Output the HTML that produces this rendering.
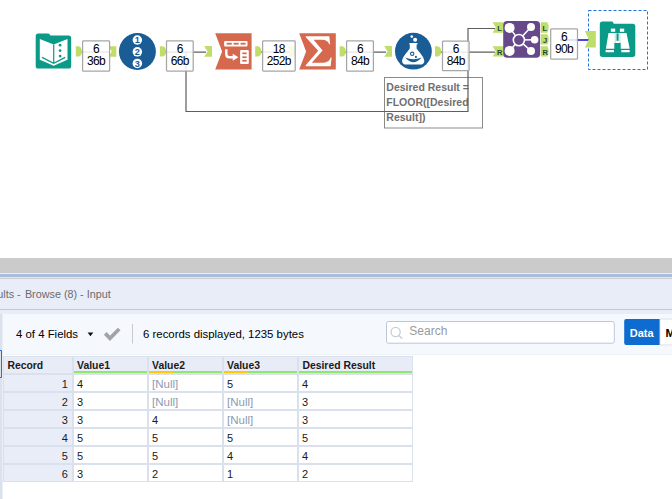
<!DOCTYPE html>
<html><head><meta charset="utf-8">
<style>
html,body{margin:0;padding:0;width:672px;height:499px;overflow:hidden;background:#fff;font-family:"Liberation Sans",sans-serif;}
.a{position:absolute;}
#canvas{position:absolute;left:0;top:0;width:672px;height:258px;}
#graybar{position:absolute;left:0;top:258px;width:672px;height:15px;background:#cbcbcb;}
#l273{position:absolute;left:0;top:273px;width:672px;height:1px;background:#ececec;}
#l274{position:absolute;left:0;top:274px;width:672px;height:3px;background:#abbcdc;}
#l277{position:absolute;left:0;top:277px;width:672px;height:1px;background:#e6e6e8;}
#l278{position:absolute;left:0;top:278px;width:672px;height:1px;background:#cfcfd1;}
#title{position:absolute;left:0;top:279px;width:672px;height:30px;background:#e9edf8;}
#title span{position:absolute;left:-1px;top:8px;font-size:12px;color:#6d6d6d;white-space:nowrap;}
#l309{position:absolute;left:0;top:309px;width:672px;height:1px;background:#c8c9cc;}
#l310{position:absolute;left:0;top:310px;width:672px;height:4px;background:#e9edf8;}
#panel{position:absolute;left:0;top:314px;width:672px;height:40px;background:#f5f8fd;}
#l354{position:absolute;left:0;top:354px;width:672px;height:1px;background:#eef1f6;}
#strip{position:absolute;left:0;top:314px;width:2px;height:185px;background:#dbe1ed;border-right:1px solid #eaeef5;}
.tb{position:absolute;font-size:12px;color:#000;white-space:nowrap;}
#tbl{position:absolute;left:3px;top:356px;width:410px;height:126px;background:#d9dfeb;}
.c{position:absolute;height:17px;background:#fff;font-size:11px;line-height:17px;white-space:nowrap;overflow:hidden;}
.h{background:#e8ecf6;font-weight:bold;}
.r{background:#e9edf7;text-align:right;}
.n{color:#8f9bb3;}
</style></head><body>
<svg id="canvas" width="672" height="258" viewBox="0 0 672 258">
<defs>
<path id="anD" d="M0,0 H2.6 A3.6,5.15 0 0 1 2.6,10.3 H0 Z"/>
<polygon id="anN" points="0,0 7.8,0 7.8,10.6 0,10.6 3.4,5.3"/>
</defs>
<g fill="none" stroke-linecap="butt" stroke="#5e5e5e" stroke-width="1.25">
<line x1="81" y1="52" x2="110" y2="52"/>
<line x1="165" y1="52" x2="206" y2="52"/>
<line x1="261" y1="52" x2="290" y2="52"/>
<line x1="345" y1="52" x2="386" y2="52"/>
<line x1="440" y1="52" x2="495" y2="52"/>
</g>
<!-- annotation -->
<rect x="384.5" y="77.5" width="98" height="50.5" fill="none" stroke="#8a8a8a" stroke-width="1"/>
<g font-family="Liberation Sans" font-weight="bold" font-size="10.5" fill="#707070">
<text x="386.3" y="91">Desired Result =</text>
<text x="386.3" y="105.8">FLOOR([Desired</text>
<text x="386.3" y="120.6">Result])</text>
</g>
<polyline points="186,52 186,111.5 468,111.5 468,28.5 495,28.5" fill="none" stroke="#5e5e5e" stroke-width="1.2"/>
<!-- blue line to browse -->
<line x1="560" y1="40" x2="589" y2="40" stroke="#2626d6" stroke-width="1.7"/>

<!-- Text Input tool -->
<path d="M35.7,36 Q35.7,33.4 38.2,33.4 L48.3,33.4 Q49.6,33.4 50.4,35.4 L68.6,35.4 Q71.2,35.4 71.2,38 L71.2,66 Q71.2,68.6 68.6,68.6 L38.3,68.6 Q35.7,68.6 35.7,66 Z" fill="#0b9a88"/>
<polygon points="39.8,39.1 53.7,44.6 67.5,39.1 67.5,59.8 53.7,65.8 39.8,59.8" fill="#fff"/>
<line x1="53.7" y1="44.6" x2="53.7" y2="63.3" stroke="#0b9a88" stroke-width="1.2"/>
<polyline points="42.1,57.3 53.7,63.3 65.2,57.3" fill="none" stroke="#0b9a88" stroke-width="1.3"/>
<circle cx="60.1" cy="45.2" r="1.35" fill="#0b9a88"/>
<circle cx="60.1" cy="50.6" r="1.35" fill="#0b9a88"/>
<circle cx="60.1" cy="56.1" r="1.35" fill="#0b9a88"/>
<use href="#anD" x="75.8" y="46.2" fill="#bedd6a"/>

<!-- Record ID -->
<use href="#anN" x="108.5" y="46.2" fill="#bedd6a"/>
<circle cx="137.4" cy="51.5" r="18.5" fill="#1a5d96"/>
<g fill="#fff"><circle cx="137.35" cy="40" r="4.75"/><circle cx="137.35" cy="51.8" r="4.75"/><circle cx="137.35" cy="63.4" r="4.75"/></g>
<g font-family="Liberation Sans" font-weight="bold" font-size="9.2" fill="#1a5d96" text-anchor="middle">
<text x="137.4" y="43.3">1</text><text x="137.4" y="55.1">2</text><text x="137.4" y="66.7">3</text></g>
<use href="#anD" x="159.9" y="46.3" fill="#bedd6a"/>

<!-- Cross tab -->
<use href="#anN" x="204.2" y="46.1" fill="#bedd6a"/>
<polygon points="215.2,33.3 251.6,33.3 251.6,69.5 215.2,69.5 222.1,51.5" fill="#d6684e"/>
<rect x="224.1" y="40.9" width="23.4" height="5.5" rx="1" fill="#fff"/>
<g fill="#d6684e"><rect x="226.7" y="42.8" width="5.1" height="1.8"/><rect x="233.6" y="42.8" width="5.1" height="1.8"/><rect x="240.6" y="42.8" width="5" height="1.8"/></g>
<path d="M226.3,49.2 V54.2 Q226.3,57.2 229.3,57.2 H234" fill="none" stroke="#fff" stroke-width="2.4"/>
<polygon points="232.7,53.8 238.4,57.2 232.7,60.7" fill="#fff"/>
<rect x="240.1" y="50.1" width="8.7" height="13.8" rx="1" fill="#fff"/>
<g fill="#d6684e"><rect x="242.3" y="52.5" width="4.3" height="1.7"/><rect x="242.3" y="56.4" width="4.3" height="1.7"/><rect x="242.3" y="59.9" width="4.3" height="1.7"/></g>
<use href="#anD" x="255.2" y="46.3" fill="#bedd6a"/>

<!-- Summarize -->
<use href="#anN" x="287.4" y="46.2" fill="#bedd6a"/>
<polygon points="299.2,33.3 335.8,33.3 335.8,69.5 299.2,69.5 306.1,51.5" fill="#d6684e"/>
<path d="M305.8,36.3 L329.3,36.3 L330.2,44.3 L329.2,44.3 Q327.8,39.8 322,39.8 L313.6,39.8 L322.6,50.4 L311.8,62.7 L323.5,62.7 Q329,62.7 330.7,57.6 L331.6,57.6 L330.6,66.2 L305.7,66.2 L305.7,65.2 L318.2,50.8 L305.8,37.3 Z" fill="#fff"/>
<use href="#anD" x="339.6" y="46.3" fill="#bedd6a"/>

<!-- Formula -->
<use href="#anN" x="384.2" y="46.1" fill="#bedd6a"/>
<circle cx="413.4" cy="51.2" r="18.4" fill="#1a5d96"/>
<path d="M409.4,43.1 H417.4 V44.6 H416.6 V48.4 C420,53 424.5,57.5 424.3,61.2 C424.2,63.6 422.5,64.6 420,64.6 H406.4 C403.9,64.6 402.2,63.6 402.1,61.2 C402,57.5 406.4,53 409.8,48.4 V44.6 H409.4 Z" fill="#fff"/>
<circle cx="412.2" cy="53.8" r="1.7" fill="none" stroke="#1a5d96" stroke-width="1.1"/>
<circle cx="415.9" cy="56.9" r="1.05" fill="#1a5d96"/>
<path d="M405.2,57.6 Q413.4,67 421.6,57.6 Q413.4,61 405.2,57.6 Z" fill="#1a5d96"/>
<circle cx="411.8" cy="36.6" r="1.3" fill="#fff"/>
<circle cx="415.1" cy="39.7" r="2" fill="#fff"/>
<use href="#anD" x="435" y="46.3" fill="#bedd6a"/>

<!-- Join -->
<polygon points="492.6,22.3 503.4,22.3 503.4,32.7 492.6,32.7 495.8,27.5" fill="#bedd6a"/>
<polygon points="492.6,46.2 503.4,46.2 503.4,56.6 492.6,56.6 495.8,51.4" fill="#bedd6a"/>
<rect x="503.2" y="21.1" width="36.9" height="36.6" rx="4" fill="#66498b"/>
<g stroke="#fff" stroke-width="1.5">
<line x1="518.9" y1="40.1" x2="509.6" y2="27.9"/><line x1="518.9" y1="40.1" x2="509.6" y2="50.9"/>
<line x1="518.9" y1="40.1" x2="531" y2="27.1"/><line x1="518.9" y1="40.1" x2="534.6" y2="39.8"/><line x1="518.9" y1="40.1" x2="531" y2="50.9"/>
</g>
<g fill="#fff"><circle cx="509.6" cy="27.9" r="5"/><circle cx="509.6" cy="50.9" r="5"/><circle cx="531" cy="27.1" r="4"/><circle cx="534.6" cy="39.8" r="3.8"/><circle cx="531" cy="50.9" r="4"/></g>
<circle cx="518.9" cy="40.1" r="5.6" fill="#66498b" stroke="#fff" stroke-width="1.6"/>
<g fill="#bedd6a">
<path d="M540.8,22.3 H547.3 Q550.2,27.5 547.3,32.7 H540.8 Z"/>
<path d="M540.8,34.2 H547.3 Q550.2,39.35 547.3,44.5 H540.8 Z"/>
<path d="M540.8,46.2 H547.3 Q550.2,51.35 547.3,56.5 H540.8 Z"/>
</g>
<g font-family="Liberation Sans" font-weight="bold" font-size="7.5" fill="#24453a">
<text x="497.3" y="30.6">L</text><text x="497" y="54.5">R</text>
<text x="542.4" y="30.6">L</text><text x="543" y="42.5">J</text><text x="542.4" y="54.5">R</text>
</g>

<!-- Browse -->
<rect x="588.5" y="10.5" width="59" height="59" fill="none" stroke="#1e74d8" stroke-width="1" stroke-dasharray="3,2"/>
<polygon points="584.8,31 595.8,31 595.8,47.5 584.8,47.5 588.8,39.3" fill="#bedd6a"/>
<path d="M599.8,24.1 Q599.8,21.5 602.4,21.5 L612,21.5 Q613,21.5 613.7,23.8 L632.7,23.8 Q635.3,23.8 635.3,26.4 L635.3,54.3 Q635.3,56.9 632.7,56.9 L602.4,56.9 Q599.8,56.9 599.8,54.3 Z" fill="#0b9a88"/>
<g fill="#fff">
<rect x="610.85" y="28.6" width="4.35" height="3.2"/><rect x="619.9" y="28.6" width="4.3" height="3.2"/>
<polygon points="608.5,32.9 626.5,32.9 629.7,48.7 620.7,48.7 620.7,42.9 614.3,42.9 614.3,48.7 605.9,48.7"/>
<rect x="605.6" y="50" width="8.4" height="2.3" rx="0.6"/><rect x="621.3" y="50" width="8.4" height="2.3" rx="0.6"/>
</g>
<rect x="616.5" y="33.3" width="2.1" height="7.5" fill="#0b9a88"/>
<g stroke="#0b9a88" stroke-width="0.6" opacity="0.5"><line x1="615.2" y1="33" x2="615.2" y2="42.9"/><line x1="619.9" y1="33" x2="619.9" y2="42.9"/></g>

<!-- count boxes -->
<g fill="#fff" fill-opacity="0.85" stroke="#a6a6a6" stroke-width="1.25">
<rect x="82.6" y="40.9" width="27" height="30.3" rx="0.8"/>
<rect x="166.5" y="40.8" width="26.7" height="30.3" rx="0.8"/>
<rect x="262.6" y="40.8" width="32.6" height="30.3" rx="0.8"/>
<rect x="346.6" y="40.9" width="26.8" height="30.3" rx="0.8"/>
<rect x="442.5" y="41" width="26.6" height="29.7" rx="0.8"/>
<rect x="550.7" y="28.9" width="26.8" height="30.3" rx="0.8"/>
</g>
<g font-family="Liberation Sans" font-size="12" letter-spacing="-0.6" fill="#000" text-anchor="middle">
<text x="96.0" y="53">6</text><text x="96.0" y="64.9">36b</text>
<text x="179.8" y="53">6</text><text x="179.8" y="64.9">66b</text>
<text x="278.8" y="53">18</text><text x="278.8" y="64.9">252b</text>
<text x="360.0" y="53">6</text><text x="360.0" y="64.9">84b</text>
<text x="455.8" y="53">6</text><text x="455.8" y="64.9">84b</text>
<text x="564.1" y="40.9">6</text><text x="564.1" y="52.8">90b</text>
</g>
</svg>
<div id="graybar"></div><div id="l273"></div><div id="l274"></div><div id="l277"></div><div id="l278"></div>
<div id="title"></div>
<div id="l309"></div><div id="l310"></div>
<div id="panel"></div><div id="l354"></div>
<div id="strip"></div>
<svg id="pnl" style="position:absolute;left:0;top:0" width="672" height="499" viewBox="0 0 672 499">
<!-- title -->
<g font-family="Liberation Sans" font-size="10.8" fill="#6b6b6b">
<text x="-2.7" y="298">ults -</text>
<text x="24.9" y="298">Browse (8) - Input</text>
</g>
<!-- focus rect -->
<path d="M0,350.5 H1.5 V377.5 H0" fill="none" stroke="#1a73e0" stroke-width="1"/>
<!-- toolbar -->
<g font-family="Liberation Sans" font-size="11.4" fill="#000">
<text x="16" y="337.6">4 of 4 Fields</text>
<text x="143" y="337.6">6 records displayed, 1235 bytes</text>
</g>
<polygon points="87.6,332.6 93.3,332.6 90.45,336.3" fill="#111"/>
<polyline points="105.2,333.4 110,338.4 119.2,329" fill="none" stroke="#a3a3a3" stroke-width="3.7"/>
<line x1="132.5" y1="324" x2="132.5" y2="343.5" stroke="#c9c9c9" stroke-width="1"/>
<!-- search -->
<rect x="386.5" y="321.5" width="227.8" height="21.7" rx="2" fill="#fff" stroke="#bcc6da" stroke-width="1"/>
<circle cx="395.6" cy="332" r="4.6" fill="none" stroke="#c5cde0" stroke-width="1.3"/>
<line x1="398.9" y1="335.4" x2="402.3" y2="338.8" stroke="#c5cde0" stroke-width="1.4"/>
<text x="409.3" y="334.5" font-family="Liberation Sans" font-size="12" fill="#9a9a9a">Search</text>
<!-- buttons -->
<rect x="660" y="319.1" width="14" height="25.8" fill="#fff" stroke="#dde2ea" stroke-width="1"/>
<path d="M626.2,319.1 H659.6 V344.9 H626.2 Q624.2,344.9 624.2,342.9 V321.1 Q624.2,319.1 626.2,319.1 Z" fill="#0e6bd0"/>
<text x="629.7" y="336.7" font-family="Liberation Sans" font-weight="bold" font-size="11" fill="#fff">Data</text>
<text x="665.5" y="336.9" font-family="Liberation Sans" font-weight="bold" font-size="11.5" fill="#000">M</text>
<!-- table -->
<rect x="3" y="356" width="410" height="126" fill="#dbe1ec"/>
<g fill="#e8ecf6">
<rect x="4" y="357" width="68" height="16"/>
<rect x="74" y="357" width="73" height="16"/>
<rect x="149" y="357" width="73" height="16"/>
<rect x="224" y="357" width="73" height="16"/>
<rect x="299" y="357" width="113" height="16"/>
</g>
<g fill="#8fe86c">
<rect x="74" y="371" width="73" height="2"/>
<rect x="149" y="371" width="73" height="2"/>
<rect x="224" y="371" width="73" height="2"/>
<rect x="299" y="371" width="113" height="2"/>
</g>
<g fill="#fcca0c"><rect x="149" y="371" width="24" height="2"/><rect x="224" y="371" width="24" height="2"/></g>
<rect x="4" y="375" width="68" height="16" fill="#e9edf7"/>
<rect x="74" y="375" width="73" height="16" fill="#fff"/>
<rect x="149" y="375" width="73" height="16" fill="#fff"/>
<rect x="224" y="375" width="73" height="16" fill="#fff"/>
<rect x="299" y="375" width="113" height="16" fill="#fff"/>
<text x="67.9" y="388.2" text-anchor="end" font-family="Liberation Sans" font-size="11" fill="#1a1a1a">1</text>
<text x="77.1" y="388.2" font-family="Liberation Sans" font-size="11" fill="#1a1a1a">4</text>
<text x="152.1" y="388.2" font-family="Liberation Sans" font-size="11.5" fill="#8e9ab2">[Null]</text>
<text x="227.1" y="388.2" font-family="Liberation Sans" font-size="11" fill="#1a1a1a">5</text>
<text x="302.1" y="388.2" font-family="Liberation Sans" font-size="11" fill="#1a1a1a">4</text>
<rect x="4" y="393" width="68" height="16" fill="#e9edf7"/>
<rect x="74" y="393" width="73" height="16" fill="#fff"/>
<rect x="149" y="393" width="73" height="16" fill="#fff"/>
<rect x="224" y="393" width="73" height="16" fill="#fff"/>
<rect x="299" y="393" width="113" height="16" fill="#fff"/>
<text x="67.9" y="406.2" text-anchor="end" font-family="Liberation Sans" font-size="11" fill="#1a1a1a">2</text>
<text x="77.1" y="406.2" font-family="Liberation Sans" font-size="11" fill="#1a1a1a">3</text>
<text x="152.1" y="406.2" font-family="Liberation Sans" font-size="11.5" fill="#8e9ab2">[Null]</text>
<text x="227.1" y="406.2" font-family="Liberation Sans" font-size="11.5" fill="#8e9ab2">[Null]</text>
<text x="302.1" y="406.2" font-family="Liberation Sans" font-size="11" fill="#1a1a1a">3</text>
<rect x="4" y="411" width="68" height="16" fill="#e9edf7"/>
<rect x="74" y="411" width="73" height="16" fill="#fff"/>
<rect x="149" y="411" width="73" height="16" fill="#fff"/>
<rect x="224" y="411" width="73" height="16" fill="#fff"/>
<rect x="299" y="411" width="113" height="16" fill="#fff"/>
<text x="67.9" y="424.2" text-anchor="end" font-family="Liberation Sans" font-size="11" fill="#1a1a1a">3</text>
<text x="77.1" y="424.2" font-family="Liberation Sans" font-size="11" fill="#1a1a1a">3</text>
<text x="152.1" y="424.2" font-family="Liberation Sans" font-size="11" fill="#1a1a1a">4</text>
<text x="227.1" y="424.2" font-family="Liberation Sans" font-size="11.5" fill="#8e9ab2">[Null]</text>
<text x="302.1" y="424.2" font-family="Liberation Sans" font-size="11" fill="#1a1a1a">3</text>
<rect x="4" y="429" width="68" height="16" fill="#e9edf7"/>
<rect x="74" y="429" width="73" height="16" fill="#fff"/>
<rect x="149" y="429" width="73" height="16" fill="#fff"/>
<rect x="224" y="429" width="73" height="16" fill="#fff"/>
<rect x="299" y="429" width="113" height="16" fill="#fff"/>
<text x="67.9" y="442.2" text-anchor="end" font-family="Liberation Sans" font-size="11" fill="#1a1a1a">4</text>
<text x="77.1" y="442.2" font-family="Liberation Sans" font-size="11" fill="#1a1a1a">5</text>
<text x="152.1" y="442.2" font-family="Liberation Sans" font-size="11" fill="#1a1a1a">5</text>
<text x="227.1" y="442.2" font-family="Liberation Sans" font-size="11" fill="#1a1a1a">5</text>
<text x="302.1" y="442.2" font-family="Liberation Sans" font-size="11" fill="#1a1a1a">5</text>
<rect x="4" y="447" width="68" height="16" fill="#e9edf7"/>
<rect x="74" y="447" width="73" height="16" fill="#fff"/>
<rect x="149" y="447" width="73" height="16" fill="#fff"/>
<rect x="224" y="447" width="73" height="16" fill="#fff"/>
<rect x="299" y="447" width="113" height="16" fill="#fff"/>
<text x="67.9" y="460.2" text-anchor="end" font-family="Liberation Sans" font-size="11" fill="#1a1a1a">5</text>
<text x="77.1" y="460.2" font-family="Liberation Sans" font-size="11" fill="#1a1a1a">5</text>
<text x="152.1" y="460.2" font-family="Liberation Sans" font-size="11" fill="#1a1a1a">5</text>
<text x="227.1" y="460.2" font-family="Liberation Sans" font-size="11" fill="#1a1a1a">4</text>
<text x="302.1" y="460.2" font-family="Liberation Sans" font-size="11" fill="#1a1a1a">4</text>
<rect x="4" y="465" width="68" height="16" fill="#e9edf7"/>
<rect x="74" y="465" width="73" height="16" fill="#fff"/>
<rect x="149" y="465" width="73" height="16" fill="#fff"/>
<rect x="224" y="465" width="73" height="16" fill="#fff"/>
<rect x="299" y="465" width="113" height="16" fill="#fff"/>
<text x="67.9" y="478.2" text-anchor="end" font-family="Liberation Sans" font-size="11" fill="#1a1a1a">6</text>
<text x="77.1" y="478.2" font-family="Liberation Sans" font-size="11" fill="#1a1a1a">3</text>
<text x="152.1" y="478.2" font-family="Liberation Sans" font-size="11" fill="#1a1a1a">2</text>
<text x="227.1" y="478.2" font-family="Liberation Sans" font-size="11" fill="#1a1a1a">1</text>
<text x="302.1" y="478.2" font-family="Liberation Sans" font-size="11" fill="#1a1a1a">2</text>
<g font-family="Liberation Sans" font-weight="bold" font-size="10.4" fill="#1a1a1a">
<text x="7.4" y="368.9">Record</text><text x="77.1" y="368.9">Value1</text><text x="152.1" y="368.9">Value2</text><text x="227.1" y="368.9">Value3</text><text x="302.4" y="368.9">Desired Result</text>
</g>
</svg>
</body></html>
